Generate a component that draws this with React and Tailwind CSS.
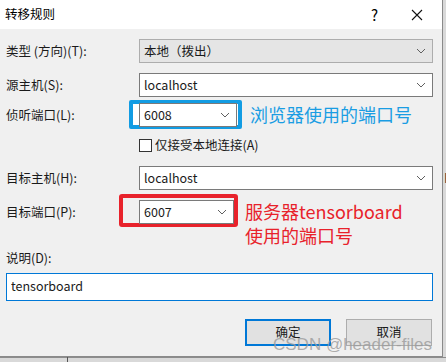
import { useState } from "react";

function Chevron() {
	return (
		<svg width="10" height="6" viewBox="0 0 10 6" className="shrink-0">
			<path d="M1 1 L5 5 L9 1" fill="none" stroke="#606060" strokeWidth="1" />
		</svg>
	);
}

function Combo({ value, width = "w-[294px]", disabled = false }) {
	return (
		<div
			className={`${width} h-[24px] flex items-center justify-between pl-[4px] pr-[6px] border ${
				disabled ? "bg-[#e5e5e5] border-[#adadad]" : "bg-white border-[#7a7a7a]"
			}`}
		>
			<span className="text-[12.5px] text-[#1a1a1a] leading-none">{value}</span>
			<Chevron />
		</div>
	);
}

function Label({ children }) {
	return (
		<div className="w-[139px] pl-[6px] text-[12.5px] text-[#1a1a1a] leading-none">
			{children}
		</div>
	);
}

export default function App() {
	const [localOnly, setLocalOnly] = useState(false);
	const [desc, setDesc] = useState("tensorboard");

	return (
		<div className="w-[446px] h-[362px] bg-[#d9d9d9] relative overflow-hidden font-['Noto_Sans_CJK_SC',sans-serif]">
			{/* window behind the dialog */}
			<div className="absolute left-[444px] top-[171px] text-[13px] text-[#333] leading-none">
				R
			</div>
			<div className="absolute left-0 right-0 top-[357px] h-px bg-[#8c8c8c]" />
			<div className="absolute left-[67px] top-[357px] w-px h-[5px] bg-[#555]" />

			<div className="w-[443px] h-[357px] bg-[#f0f0f0] border-r border-b border-[#8a8a8a] flex flex-col relative">
				{/* title bar */}
				<div className="h-[29px] bg-white flex items-center pl-[5px] pr-[19px] shrink-0">
					<span className="text-[12.5px] text-black leading-none">转移规则</span>
					<span className="ml-auto text-[15px] text-black leading-none mr-[33px]">?</span>
					<svg width="12" height="12" viewBox="0 0 12 12">
						<path d="M1 1 L11 11 M11 1 L1 11" stroke="#111" strokeWidth="1.1" />
					</svg>
				</div>

				<div className="flex flex-col">
					<div className="flex items-center mt-[10px]">
						<Label>类型 (方向)(T):</Label>
						<Combo value="本地（拨出）" disabled />
					</div>

					<div className="flex items-center mt-[10px]">
						<Label>源主机(S):</Label>
						<Combo value="localhost" />
					</div>

					<div className="flex items-center mt-[6px]">
						<Label>侦听端口(L):</Label>
						<div className="relative">
							<div className="absolute left-[-10px] top-[-3px] w-[113px] h-[29px] bg-white border-[4px] border-[#129ce3] rounded-[2px]" />
							<div className="relative">
								<Combo value="6008" width="w-[98px]" />
							</div>
						</div>
						<span className="ml-[13px] text-[18px] text-[#1a9de3] leading-none -mt-[2px]">
							浏览器使用的端口号
						</span>
					</div>

					<div className="flex items-center mt-[12px] pl-[139px]">
						<button
							onClick={() => setLocalOnly(!localOnly)}
							className="w-[13px] h-[13px] border border-[#333] bg-white flex items-center justify-center"
						>
							{localOnly && (
								<svg width="9" height="9" viewBox="0 0 9 9">
									<path d="M1 4.5 L3.5 7 L8 1.5" fill="none" stroke="#111" strokeWidth="1.3" />
								</svg>
							)}
						</button>
						<span className="ml-[3px] text-[12.5px] text-[#1a1a1a] leading-none">
							仅接受本地连接(A)
						</span>
					</div>

					<div className="flex items-center mt-[14px]">
						<Label>目标主机(H):</Label>
						<Combo value="localhost" />
					</div>

					<div className="flex items-start mt-[10px]">
						<div className="h-[24px] flex items-center">
							<Label>目标端口(P):</Label>
						</div>
						<div className="relative">
							<div className="absolute left-[-20px] top-[-6px] w-[119px] h-[33px] bg-[#f0f0f0] border-[4px] border-[#e8222b] rounded-[3px]" />
							<div className="relative">
								<Combo value="6007" width="w-[95px]" />
							</div>
						</div>
						<div className="ml-[11px] -mt-[1px] text-[18px] text-[#e8222b] leading-[24px]">
							服务器tensorboard
							<br />
							使用的端口号
						</div>
					</div>

					<div className="mt-[5px] pl-[6px] text-[12.5px] text-[#1a1a1a] leading-none">
						说明(D):
					</div>

					<div className="mt-[8px] ml-[6px] w-[427px] h-[28px] bg-white border border-[#0078d7] flex items-center">
						<input
							value={desc}
							onChange={(e) => setDesc(e.target.value)}
							className="w-full px-[4px] text-[12.5px] text-[#1a1a1a] outline-none bg-transparent"
						/>
					</div>

					<div className="flex justify-end gap-[15px] mt-[18px] pr-[10px]">
						<button className="w-[86px] h-[27px] bg-[#e1e1e1] border-2 border-[#0078d7] text-[12.5px] text-[#1a1a1a] leading-none">
							确定
						</button>
						<button className="w-[86px] h-[27px] bg-[#e1e1e1] border border-[#adadad] text-[12.5px] text-[#1a1a1a] leading-none">
							取消
						</button>
					</div>
				</div>

				<div className="absolute left-[273px] top-[336px] text-[17px] text-[#9a9a9a]/80 font-['Liberation_Sans',sans-serif] leading-none">
					CSDN @header-files
				</div>
			</div>
		</div>
	);
}
